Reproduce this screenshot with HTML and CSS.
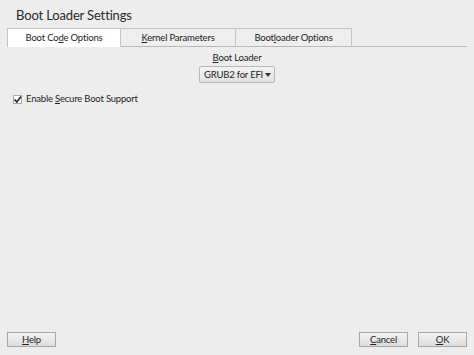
FILE: index.html
```html
<!DOCTYPE html>
<html>
<head>
<meta charset="utf-8">
<link rel="stylesheet" href="styles.css">
</head>
<body>
<div class="dialog">
  <h1 class="title">Boot Loader Settings</h1>
  <div class="tabs">
    <div class="tab active">Boot Co<u>d</u>e Options</div>
    <div class="tab"><u>K</u>ernel Parameters</div>
    <div class="tab">Boot<u>l</u>oader Options</div>
    <div class="tab-fill"></div>
  </div>
  <div class="content">
    <div class="loader">
      <div class="label"><u>B</u>oot Loader</div>
      <div class="combo"><span>GRUB2 for EFI</span><span class="arrow"></span></div>
    </div>
    <label class="check">
      <span class="box"><svg width="9" height="9" viewBox="0 0 9 9"><path d="M1.5 4.5 L3.8 7 L8 1.5" fill="none" stroke="#222" stroke-width="1.6"/></svg></span>
      <span>Enable <u>S</u>ecure Boot Support</span>
    </label>
  </div>
  <div class="buttons">
    <div class="btn"><u>H</u>elp</div>
    <div class="spacer"></div>
    <div class="btn"><u>C</u>ancel</div>
    <div class="btn"><u>O</u>K</div>
  </div>
</div>
</body>
</html>
```
FILE: styles.css
```css
html, body { margin: 0; padding: 0; }
body {
  width: 474px; height: 355px;
  background: #ededed;
  font-family: Lato, "Open Sans", sans-serif;
  font-size: 9.5px;
  letter-spacing: -0.2px;
  color: #222;
  overflow: hidden;
}
u { text-decoration: underline; text-underline-offset: 1px; }
.dialog {
  height: 355px;
  display: flex; flex-direction: column;
  padding: 0 7px 0 7px;
  box-sizing: border-box;
}
.title {
  margin: 6px 0 0 9px;
  font-size: 13px; font-weight: normal;
  letter-spacing: -0.15px;
  color: #2a2a2a;
  height: 22px; line-height: 18px;
}
.tabs {
  display: flex;
  height: 18px;
  border-bottom: 1px solid #b9b9b9;
}
.tab {
  width: 115px;
  box-sizing: border-box;
  border: 1px solid #c3c3c3;
  border-bottom: none;
  border-left: none;
  background: #eeeeee;
  text-align: center;
  line-height: 17px;
}
.tab:first-child { border-left: 1px solid #c3c3c3; width: 114px; }
.tab:nth-child(3) { width: 116px; }
.tab.active { background: #fff; height: 19px; }
.tab-fill { flex: 1; }
.content { flex: 1; }
.loader {
  display: flex; flex-direction: column; align-items: center;
  margin-top: 5px;
}
.label { line-height: 12px; }
.combo {
  margin-top: 2px;
  height: 17px; box-sizing: border-box;
  border: 1px solid #b8b8b8;
  border-radius: 2px;
  background: linear-gradient(#f3f3f3, #e2e2e2);
  padding: 0 3px 0 4px;
  display: flex; align-items: center;
  line-height: 15px;
}
.arrow {
  width: 0; height: 0; margin-left: 2px; margin-top: 1px;
  border-left: 3px solid transparent; border-right: 3px solid transparent;
  border-top: 4px solid #333;
}
.check {
  display: flex; align-items: center;
  margin: 10px 0 0 6px;
  gap: 4px;
  line-height: 12px;
}
.box {
  width: 9px; height: 9px; box-sizing: border-box;
  border: 1px solid #aaa;
  background: #fff;
  display: flex; align-items: center; justify-content: center;
}
.box svg { flex: none; margin: -1px; }
.buttons {
  display: flex; gap: 10px;
  margin-bottom: 8px;
}
.spacer { flex: 1; }
.btn {
  width: 49px; height: 15px; box-sizing: border-box;
  border: 1px solid #a5a5a5;
  background: linear-gradient(#f4f4f4, #dcdcdc);
  text-align: center; line-height: 13px;
}
```
